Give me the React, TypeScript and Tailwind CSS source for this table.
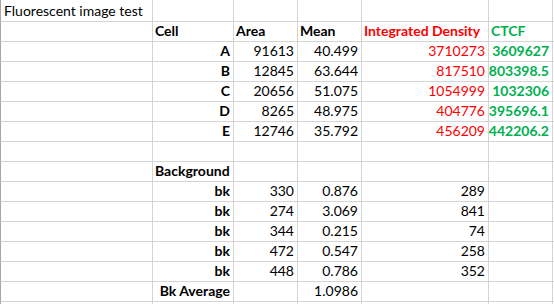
import React from "react";

type Cell = { t?: string; b?: boolean; c?: string; r?: boolean };

const RED = "text-[#ff0000]";
const GREEN = "text-[#00b050]";

const rows: Cell[][] = [
  [{ t: "Fluorescent image test" }, {}, {}, {}, {}, {}],
  [
    {},
    { t: "Cell", b: true },
    { t: "Area", b: true },
    { t: "Mean", b: true },
    { t: "Integrated Density", b: true, c: RED },
    { t: "CTCF", b: true, c: GREEN },
  ],
  ...[
    ["A", "91613", "40.499", "3710273", "3609627"],
    ["B", "12845", "63.644", "817510", "803398.5"],
    ["C", "20656", "51.075", "1054999", "1032306"],
    ["D", "8265", "48.975", "404776", "395696.1"],
    ["E", "12746", "35.792", "456209", "442206.2"],
  ].map((r) => [
    {},
    { t: r[0], b: true, r: true },
    { t: r[1], r: true },
    { t: r[2], r: true },
    { t: r[3], r: true, c: RED },
    { t: r[4], r: true, b: true, c: GREEN },
  ]),
  [{}, {}, {}, {}, {}, {}],
  [{}, { t: "Background", b: true }, {}, {}, {}, {}],
  ...[
    ["330", "0.876", "289"],
    ["274", "3.069", "841"],
    ["344", "0.215", "74"],
    ["472", "0.547", "258"],
    ["448", "0.786", "352"],
  ].map((r) => [
    {},
    { t: "bk", b: true, r: true },
    { t: r[0], r: true },
    { t: r[1], r: true },
    { t: r[2], r: true },
    {},
  ]),
  [{}, { t: "Bk Average", b: true, r: true }, {}, { t: "1.0986", r: true }, {}, {}],
  [{}, {}, {}, {}, {}, {}],
];

export default function App() {
  return (
    <div
      className="w-[554px] h-[304px] overflow-hidden bg-white text-black"
      style={{ fontFamily: "Lato, 'Liberation Sans', sans-serif" }}
    >
      <div className="grid grid-cols-[153px_81px_64px_64px_127px_64px_1fr]">
        {rows.map((row, i) => (
          <React.Fragment key={i}>
            {[...row, {} as Cell].map((cell, j) => (
              <div
                key={j}
                className={[
                  "flex items-end border-b border-r border-[#d4d4d4] pl-[2px] pr-[3px] pb-[1px] text-[14px] leading-[18px] whitespace-nowrap overflow-visible",
                  i === 0 ? "h-[22px]" : "h-[20px]",
                  j === 0 ? "border-l border-l-[#a6a6a6] pl-[3px]" : "",
                  cell.r ? "justify-end" : "justify-start",
                  cell.b ? "font-bold" : "",
                  cell.c ?? "",
                ].join(" ")}
              >
                {cell.t ?? ""}
              </div>
            ))}
          </React.Fragment>
        ))}
      </div>
    </div>
  );
}
